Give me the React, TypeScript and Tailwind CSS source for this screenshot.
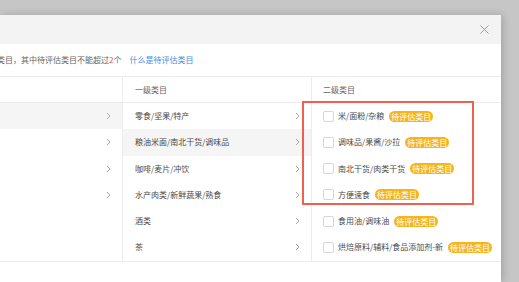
import React from "react";

const FONT = { fontFamily: '"Noto Sans CJK SC", "Noto Sans", sans-serif' };

function Chevron() {
  return (
    <svg width="5" height="8" viewBox="0 0 5 8" className="shrink-0">
      <path d="M1 1 L4 4 L1 7" fill="none" stroke="#a8a8a8" strokeWidth="1" />
    </svg>
  );
}

function Badge() {
  return (
    <span className="ml-[5px] inline-flex h-[11px] items-center rounded-full bg-[#f6b51e] px-[2px] text-[8px] leading-[11px] text-white">
      待评估类目
    </span>
  );
}

const level1 = [
  { name: "零食/坚果/特产", arrow: true },
  { name: "粮油米面/南北干货/调味品", arrow: true, active: true },
  { name: "咖啡/麦片/冲饮", arrow: true },
  { name: "水产肉类/新鲜蔬果/熟食", arrow: true },
  { name: "酒类", arrow: true },
  { name: "茶", arrow: true },
];

const level2 = [
  "米/面粉/杂粮",
  "调味品/果酱/沙拉",
  "南北干货/肉类干货",
  "方便速食",
  "食用油/调味油",
  "烘焙原料/辅料/食品添加剂-新",
];

export default function App() {
  return (
    <div
      className="h-[282px] w-[519px] overflow-hidden bg-[#c6c6c6] pt-[15px]"
      style={FONT}
    >
      <div className="relative h-[267px] w-[501px] bg-white shadow-[2px_0_8px_rgba(0,0,0,0.18)]">
        <div className="flex h-[29px] items-center justify-end bg-[#f3f3f3] pr-[12px]">
          <svg width="9" height="9" viewBox="0 0 9 9">
            <path d="M0.5 0.5 L8.5 8.5 M8.5 0.5 L0.5 8.5" stroke="#9a9a9a" strokeWidth="1" />
          </svg>
        </div>

        <div className="flex h-[32px] items-center text-[8px] text-[#666]">
          <span className="-ml-[3px] whitespace-nowrap">
            类目，其中待评估类目不能超过<span className="text-[#f5463c]">2</span>个
          </span>
          <span className="ml-[8px] whitespace-nowrap text-[#3d8ee8]">什么是待评估类目</span>
        </div>

        <div className="grid grid-cols-[123px_189px_189px] border-y border-[#ececec] text-[8px] text-[#4a4a4a]">
          <div className="flex flex-col border-r border-[#ececec]">
            <div className="h-[26px] border-b border-[#ececec]" />
            {[0, 1, 2, 3, 4, 5].map((i) => (
              <div
                key={i}
                className={`flex h-[26.25px] items-center justify-end pr-[11px] ${i === 0 ? "bg-[#f5f5f5]" : ""}`}
              >
                {i < 4 && <Chevron />}
              </div>
            ))}
          </div>

          <div className="flex flex-col border-r border-[#ececec]">
            <div className="flex h-[26px] items-center border-b border-[#ececec] pl-[12px] text-[#666]">
              一级类目
            </div>
            {level1.map((c) => (
              <div
                key={c.name}
                className={`flex h-[26.25px] items-center justify-between pl-[12px] pr-[11px] ${c.active ? "bg-[#f5f5f5]" : ""}`}
              >
                <span className="whitespace-nowrap">{c.name}</span>
                {c.arrow && <Chevron />}
              </div>
            ))}
          </div>

          <div className="flex flex-col">
            <div className="flex h-[26px] items-center border-b border-[#ececec] pl-[11px] text-[#666]">
              二级类目
            </div>
            {level2.map((name) => (
              <div key={name} className="flex h-[26.25px] items-center pl-[11px]">
                <span className="h-[11px] w-[11px] shrink-0 rounded-[2px] border border-[#d6d6d6] bg-white" />
                <span className="ml-[4px] whitespace-nowrap">{name}</span>
                <Badge />
              </div>
            ))}
          </div>
        </div>

        <div className="absolute left-[302px] top-[86px] h-[104px] w-[172px] border-2 border-[#f0604f]" />
      </div>
    </div>
  );
}
